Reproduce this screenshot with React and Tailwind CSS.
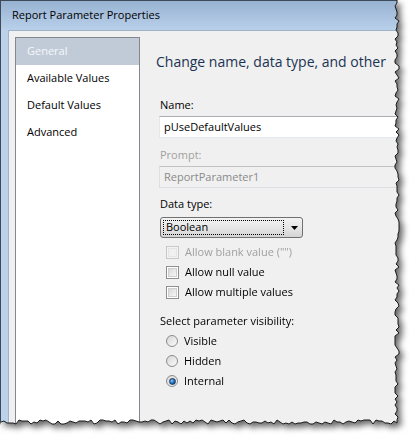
const font = { fontFamily: '"Open Sans", "Noto Sans", sans-serif' };

// torn paper edge, computed once
function tornPoints() {
  let s = 7;
  const rnd = () => {
    s = (s * 9301 + 49297) % 233280;
    return s / 233280;
  };
  const right = [];
  for (let y = 0; y <= 422; y += 3) right.push([397 + Math.round((rnd() - 0.5) * 5), y]);
  const bottom = [];
  for (let x = 397; x >= 0; x -= 3) bottom.push([x, 422 + Math.round((rnd() - 0.5) * 5)]);
  return [...right, ...bottom];
}
const edge = tornPoints();
const clip = `polygon(0px 0px, ${edge.map(([x, y]) => `${x}px ${y}px`).join(', ')}, 0px 425px)`;

function Checkbox({ label, disabled }) {
  return (
    <div className="h-[20px] flex items-center pl-[6px]">
      <span
        className={
          'w-[13px] h-[13px] border flex items-center justify-center ' +
          (disabled ? 'border-[#c8c8c8] bg-[#f4f4f4]' : 'border-[#8e8f8f] bg-white')
        }
      >
        <span
          className={
            'w-[9px] h-[9px] border ' +
            (disabled ? 'border-[#e4e4e4] bg-[#f0f0f0]' : 'border-[#cfcfcf] bg-gradient-to-br from-[#d8d8d8] to-[#f6f6f6]')
          }
        />
      </span>
      <span className={'ml-[6px] text-[11px] ' + (disabled ? 'text-[#a0a0a0]' : 'text-black')}>{label}</span>
    </div>
  );
}

function Radio({ label, checked }) {
  return (
    <div className="h-[20px] flex items-center pl-[6px]">
      <span className="w-[12px] h-[12px] rounded-full border border-[#8a8a8a] bg-gradient-to-br from-[#d6d6d6] to-[#fbfbfb] flex items-center justify-center">
        {checked && (
          <span className="w-[7px] h-[7px] rounded-full bg-[radial-gradient(circle_at_35%_35%,#8cc8f5,#1d6bb8_55%,#0a3767)] border border-[#16355a]" />
        )}
      </span>
      <span className="ml-[6px] text-[11px] text-black">{label}</span>
    </div>
  );
}

export default function App() {
  return (
    <div className="relative w-[413px] h-[435px] bg-white overflow-hidden" style={font}>
      <div className="[filter:drop-shadow(4px_4px_3px_rgba(0,0,0,0.6))]">
        <div className="w-[400px] h-[426px] bg-[#bcd2ea] border-l border-t border-[#3c4a5a]" style={{ clipPath: clip }}>
          <div className="h-[29px] bg-gradient-to-b from-[#97b2d2] to-[#b9d0ea] pl-[11px] flex items-center">
            <span className="text-[11px] text-black">Report Parameter Properties</span>
          </div>
          <div className="ml-[7px] h-[400px] bg-[#f0f0f0] border-l border-t border-[#9fb3cb] flex">
            <div className="shrink-0 ml-[6px] mt-[6px] w-[125px] h-[400px] border border-[#828790] bg-white flex flex-col text-[11px]">
              <div className="h-[27px] bg-[#c1cbd7] text-[#f6f8fa] px-[11px] flex items-center">General</div>
              <div className="h-[27px] px-[11px] flex items-center text-black">Available Values</div>
              <div className="h-[27px] px-[11px] flex items-center text-black">Default Values</div>
              <div className="h-[27px] px-[11px] flex items-center text-black">Advanced</div>
            </div>
            <div className="shrink-0 ml-[16px] pt-[20px] flex flex-col whitespace-nowrap">
              <div className="h-[20px] flex items-center text-[14px] text-[#1b3352]">Change name, data type, and other</div>
              <div className="pl-[4px] flex flex-col">
                <div className="mt-[26px] h-[16px] flex items-center text-[11px] text-black">Name:</div>
                <div className="mt-[3px] -ml-[1px] w-[250px] h-[22px] bg-white border border-[#e2e8ee] border-t-[#abadb3] flex items-center pl-[4px] text-[11px] text-black">
                  pUseDefaultValues
                </div>
                <div className="mt-[9px] h-[16px] flex items-center text-[11px] text-[#a0a0a0]">Prompt:</div>
                <div className="mt-[3px] -ml-[1px] w-[250px] h-[22px] bg-[#f0f0f0] border border-[#dcdfe3] border-t-[#c0c2c6] flex items-center pl-[4px] text-[11px] text-[#8a8a8a]">
                  ReportParameter1
                </div>
                <div className="mt-[8px] h-[16px] flex items-center text-[11px] text-black">Data type:</div>
                <div className="mt-[5px] w-[143px] h-[21px] rounded-[3px] border border-[#707070] bg-gradient-to-b from-[#f3f3f3] via-[#e6e6e6] to-[#d4d4d4] flex items-center p-[2px]">
                  <div className="w-[121px] h-full border border-dotted border-black flex items-center pl-[2px] text-[11px] text-black">
                    Boolean
                  </div>
                  <svg width="7" height="4" viewBox="0 0 7 4" className="ml-[7px]">
                    <polygon points="0,0 7,0 3.5,4" fill="#000" />
                  </svg>
                </div>
                <div className="mt-[4px] flex flex-col">
                  <Checkbox label={'Allow blank value ("")'} disabled />
                  <Checkbox label="Allow null value" />
                  <Checkbox label="Allow multiple values" />
                </div>
                <div className="mt-[11px] h-[16px] flex items-center text-[11px] text-black">Select parameter visibility:</div>
                <div className="mt-[2px] flex flex-col">
                  <Radio label="Visible" />
                  <Radio label="Hidden" />
                  <Radio label="Internal" checked />
                </div>
              </div>
            </div>
          </div>
        </div>
      </div>
      <svg className="absolute inset-0 pointer-events-none" width="413" height="435">
        <polyline points={edge.map(([x, y]) => `${x},${y}`).join(' ')} fill="none" stroke="#1a1a1a" strokeWidth="1" />
      </svg>
    </div>
  );
}
